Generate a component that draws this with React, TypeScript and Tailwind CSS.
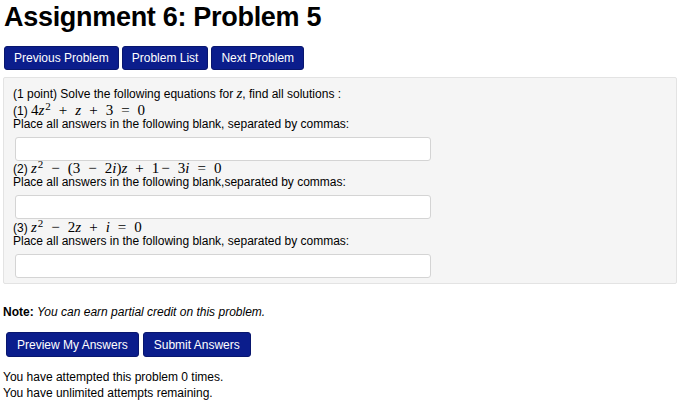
import React from "react";

const serif = "font-['Liberation_Serif',serif]";

function Op({ c }: { c: string }) {
  return <span className="inline-block mx-[8px]">{c}</span>;
}

function MathLine({ label, children, extra = "" }: { label: string; children: React.ReactNode; extra?: string }) {
  return (
    <div className={`h-[15px] leading-[15px] whitespace-nowrap ${extra}`}>
      <span>{label} </span>
      <span className={`${serif} text-[15px] leading-[15px]`}>{children}</span>
    </div>
  );
}

const I = ({ c }: { c: string }) => <i>{c}</i>;
const Sup = ({ c }: { c: string }) => (
  <span className="inline-block align-baseline text-[11px] leading-[0] relative top-[-5px] ml-[1px]">{c}</span>
);

function PlaceLine({ text }: { text: string }) {
  return <div className="h-[13px] leading-[13px] whitespace-nowrap">{text}</div>;
}

function Blank({ extra = "" }: { extra?: string }) {
  return (
    <div
      className={`ml-[2px] w-[416px] h-[24px] bg-white border border-[#d4d4d4] rounded-[3px] ${extra}`}
    />
  );
}

function Btn({ children, cls = "" }: { children: React.ReactNode; cls?: string }) {
  return (
    <div
      className={`flex items-center text-white text-[12px] bg-[#0b1d8c] border border-[#08166e] rounded-[3px] ${cls}`}
    >
      {children}
    </div>
  );
}

export default function App() {
  return (
    <div className="w-[700px] h-[412px] bg-white text-black font-['Liberation_Sans',Arial,sans-serif] overflow-hidden">
      <h1 className="pl-[4px] pt-[1px] h-[41px] text-[27px] leading-[32px] font-bold tracking-[-0.3px]">
        Assignment 6: Problem 5
      </h1>
      <div className="flex pl-[4px] gap-[3px] mt-[5px]">
        <Btn cls="h-[24px] px-[9px]">Previous Problem</Btn>
        <Btn cls="h-[24px] px-[9px]">Problem List</Btn>
        <Btn cls="h-[24px] px-[9px]">Next Problem</Btn>
      </div>
      <div className="ml-[3px] mt-[7px] w-[674px] bg-[#f5f5f5] border border-[#e3e3e3] rounded-[2px] pl-[9px] pt-[8px] pb-[5px] text-[12px]">
        <div className="h-[15px] leading-[15px] whitespace-nowrap">
          (1 point) Solve the following equations for{" "}
          <i className={`${serif} text-[15px] leading-[15px]`}>z</i>, find all solutions :
        </div>
        <MathLine label="(1)" extra="mt-[2px]">
          4<I c="z" />
          <Sup c="2" />
          <Op c="+" />
          <I c="z" />
          <Op c="+" />3<Op c="=" />0
        </MathLine>
        <PlaceLine text="Place all answers in the following blank, separated by commas:" />
        <Blank extra="mt-[6px]" />
        <MathLine label="(2)">
          <I c="z" />
          <Sup c="2" />
          <Op c="−" />
          (3<Op c="−" />2<I c="i" />)<I c="z" />
          <Op c="+" />1<span className="ml-[2px] mr-[8px]">−</span>3<I c="i" />
          <Op c="=" />0
        </MathLine>
        <PlaceLine text="Place all answers in the following blank,separated by commas:" />
        <Blank extra="mt-[6px]" />
        <MathLine label="(3)" extra="mt-[1px]">
          <I c="z" />
          <Sup c="2" />
          <Op c="−" />2<I c="z" />
          <Op c="+" />
          <I c="i" />
          <Op c="=" />0
        </MathLine>
        <PlaceLine text="Place all answers in the following blank, separated by commas:" />
        <Blank extra="mt-[6px]" />
      </div>
      <div className="pl-[3px] mt-[21px] text-[12px] leading-[15px]">
        <b>Note:</b> <i>You can earn partial credit on this problem.</i>
      </div>
      <div className="flex pl-[6px] gap-[4px] mt-[12px]">
        <Btn cls="h-[25px] px-[10px]">Preview My Answers</Btn>
        <Btn cls="h-[25px] px-[10px]">Submit Answers</Btn>
      </div>
      <div className="pl-[3px] mt-[12px] text-[12px] leading-[16px]">
        <div>You have attempted this problem 0 times.</div>
        <div>You have unlimited attempts remaining.</div>
      </div>
    </div>
  );
}
